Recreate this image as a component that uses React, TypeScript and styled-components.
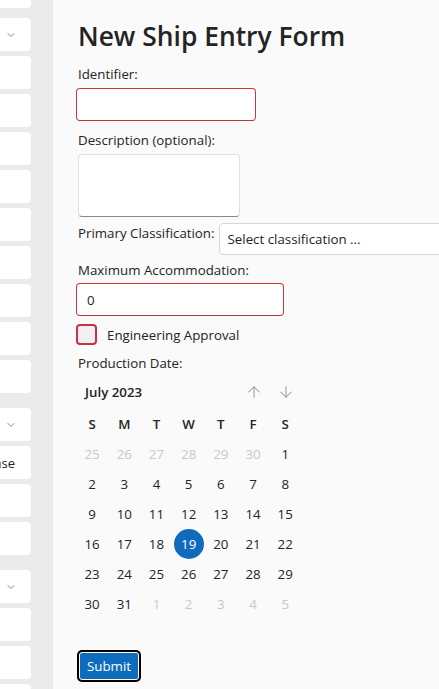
import styled, { createGlobalStyle } from 'styled-components';
import { ArrowUp, ArrowDown, ChevronDown } from 'lucide-react';

const GlobalStyle = createGlobalStyle`
  html, body {
    margin: 0;
    height: 100%;
    overflow: hidden;
  }
  body {
    font-family: "Open Sans", "Noto Sans", sans-serif;
    font-size: 13.3px;
    color: #242424;
  }
  * {
    box-sizing: border-box;
  }
`;

const Page = styled.div`
  display: flex;
  height: 100vh;
`;

const Sidebar = styled.nav`
  width: 53px;
  flex-shrink: 0;
  background-color: #ebebeb;
  overflow: hidden;
  display: flex;
  flex-direction: column;
`;

const NavGroup = styled.div<{ $top: number }>`
  display: flex;
  flex-direction: column;
  gap: 5px;
  margin-top: ${({ $top }) => $top}px;
`;

const NavCard = styled.div`
  height: 33px;
  width: 43px;
  margin-left: -12px;
  flex-shrink: 0;
  background-color: #fff;
  border-radius: 4px;
  display: flex;
  align-items: center;
  justify-content: flex-end;
  padding-right: 16px;
  color: #242424;
  white-space: nowrap;
  font-size: 13px;

  svg {
    color: #616161;
    margin-right: -2px;
  }
`;

const Main = styled.main`
  flex: 1;
  background-color: #fafafa;
  padding-left: 25px;
  overflow: hidden;
  display: flex;
  flex-direction: column;
`;

const Title = styled.h1`
  margin: 18px 0 10px 0;
  font-size: 26.4px;
  line-height: 36px;
  font-weight: 600;
  color: #242424;
  white-space: nowrap;
`;

const Label = styled.label`
  display: block;
  line-height: 20px;
  white-space: nowrap;
`;

const Field = styled.div<{ $gap: number }>`
  display: flex;
  flex-direction: column;
  align-items: flex-start;
  gap: ${({ $gap }) => $gap}px;
`;

const TextInput = styled.input<{ $width: number }>`
  width: ${({ $width }) => $width}px;
  height: 33px;
  margin-left: -2px;
  padding: 0 10px;
  border: 1px solid #d13438;
  border-bottom-color: #b4343a;
  border-radius: 4px;
  background-color: #fff;
  font: inherit;
  color: #242424;
  outline: none;
`;

const TextArea = styled.textarea`
  width: 162px;
  height: 63px;
  border: 1px solid #e0e0e0;
  border-bottom-color: #8a8a8a;
  border-radius: 4px;
  background-color: #fff;
  resize: none;
  font: inherit;
  outline: none;
`;

const InlineRow = styled.div`
  display: flex;
  align-items: flex-start;
  gap: 4px;
  margin-top: 6px;
`;

const Select = styled.select`
  width: 260px;
  height: 32px;
  flex-shrink: 0;
  padding: 0 8px;
  border: 1px solid #d6d6d6;
  border-radius: 4px;
  background-color: #fff;
  font: inherit;
  color: #242424;
  appearance: none;
  outline: none;
`;

const CheckRow = styled.label`
  display: flex;
  align-items: center;
  gap: 10px;
  margin: 8px 0 0 -2px;
  line-height: 20px;
`;

const CheckBox = styled.span`
  width: 21px;
  height: 21px;
  border: 2px solid #c4314b;
  border-radius: 4px;
  background-color: #f0f0f0;
`;

const Calendar = styled.div`
  margin: 2px 0 0 -2px;
  width: 226px;
`;

const CalendarHeader = styled.div`
  height: 34px;
  display: flex;
  align-items: center;
  padding-left: 9px;
`;

const MonthTitle = styled.span`
  flex: 1;
  font-weight: 600;
`;

const NavButton = styled.span`
  width: 32px;
  display: flex;
  justify-content: center;
  color: #9e9e9e;
`;

const DayGrid = styled.div`
  display: grid;
  grid-template-columns: repeat(7, 32.2px);
  grid-auto-rows: 30px;
`;

const WeekDay = styled.span`
  display: flex;
  align-items: center;
  justify-content: center;
  font-weight: 600;
`;

const Day = styled.span<{ $muted?: boolean; $selected?: boolean }>`
  display: flex;
  align-items: center;
  justify-content: center;
  justify-self: center;
  width: 30px;
  height: 30px;
  border-radius: 50%;
  color: ${({ $muted, $selected }) =>
    $selected ? '#fff' : $muted ? '#c8c8c8' : '#242424'};
  background-color: ${({ $selected }) => ($selected ? '#0f6cbd' : 'transparent')};
`;

const SubmitButton = styled.button`
  align-self: flex-start;
  margin: 33px 0 0 1px;
  height: 28px;
  padding: 0 7px;
  border: 1px solid #fff;
  border-radius: 3px;
  box-shadow: 0 0 0 2px #000;
  background-color: #0f6cbd;
  color: #fff;
  font: inherit;
  cursor: pointer;
`;

const weekDays = ['S', 'M', 'T', 'W', 'T', 'F', 'S'];

const days: { n: number; muted?: boolean }[] = [
  ...[25, 26, 27, 28, 29, 30].map((n) => ({ n, muted: true })),
  ...Array.from({ length: 31 }, (_, i) => ({ n: i + 1 })),
  ...[1, 2, 3, 4, 5].map((n) => ({ n, muted: true })),
];

const navGroups: { top: number; items: (string | null)[] }[] = [
  { top: -25, items: [null] },
  { top: 10, items: ['chevron', null, null, null, null, null, null, null, null, null] },
  { top: 15, items: ['chevron', 'Release', null, null] },
  { top: 15, items: ['chevron', null, null, null] },
];

export default function App() {
  return (
    <Page>
      <GlobalStyle />
      <Sidebar>
        {navGroups.map((group, gi) => (
          <NavGroup key={gi} $top={group.top}>
            {group.items.map((item, i) => (
              <NavCard key={i}>
                {item === 'chevron' ? (
                  <ChevronDown size={12} strokeWidth={1.5} />
                ) : (
                  item
                )}
              </NavCard>
            ))}
          </NavGroup>
        ))}
      </Sidebar>
      <Main>
        <Title>New Ship Entry Form</Title>
        <Field $gap={4}>
          <Label htmlFor="identifier">Identifier:</Label>
          <TextInput id="identifier" $width={180} />
        </Field>
        <Field $gap={4} style={{ marginTop: 9 }}>
          <Label htmlFor="description">Description (optional):</Label>
          <TextArea id="description" />
        </Field>
        <InlineRow>
          <Label htmlFor="classification">Primary Classification:</Label>
          <Select id="classification" defaultValue="">
            <option value="">Select classification ...</option>
          </Select>
        </InlineRow>
        <Field $gap={3} style={{ marginTop: 5 }}>
          <Label htmlFor="accommodation">Maximum Accommodation:</Label>
          <TextInput id="accommodation" $width={208} defaultValue="0" />
        </Field>
        <CheckRow>
          <CheckBox />
          Engineering Approval
        </CheckRow>
        <Label style={{ marginTop: 8 }}>Production Date:</Label>
        <Calendar>
          <CalendarHeader>
            <MonthTitle>July 2023</MonthTitle>
            <NavButton>
              <ArrowUp size={18} strokeWidth={1.4} />
            </NavButton>
            <NavButton>
              <ArrowDown size={18} strokeWidth={1.4} />
            </NavButton>
          </CalendarHeader>
          <DayGrid>
            {weekDays.map((d, i) => (
              <WeekDay key={i}>{d}</WeekDay>
            ))}
            {days.map((d, i) => (
              <Day key={i} $muted={d.muted} $selected={!d.muted && d.n === 19}>
                {d.n}
              </Day>
            ))}
          </DayGrid>
        </Calendar>
        <SubmitButton type="button">Submit</SubmitButton>
      </Main>
    </Page>
  );
}
